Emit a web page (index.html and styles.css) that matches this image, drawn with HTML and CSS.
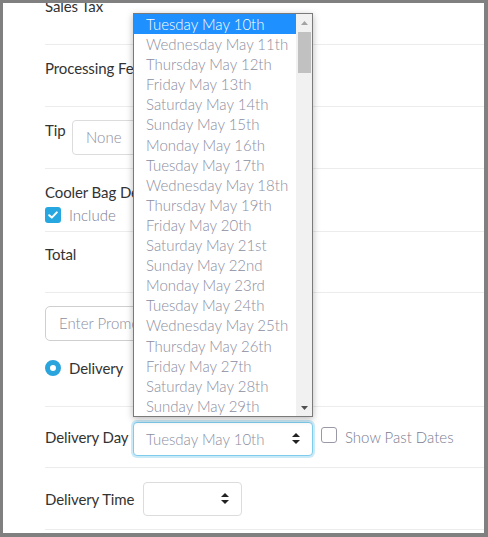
FILE: index.html
```html
<!DOCTYPE html>
<html>
<head>
<meta charset="utf-8">
<link rel="stylesheet" href="styles.css">
</head>
<body>
<div class="frame">
  <div class="sheet">
    <div class="row row-first"><span class="label">Sales Tax</span></div>
    <div class="row"><span class="label">Processing Fee</span></div>
    <div class="row">
      <span class="label label-tip">Tip</span>
      <div class="field field-tip">None</div>
    </div>
    <div class="row row-cooler">
      <span class="label">Cooler Bag Deposit</span>
      <div class="check-line">
        <span class="checkbox checked">
          <svg width="10" height="8" viewBox="0 0 10 8"><path d="M1.2 4.2 L3.8 6.6 L8.8 1.4" fill="none" stroke="#fff" stroke-width="2" stroke-linecap="round" stroke-linejoin="round"/></svg>
        </span>
        <span class="muted">Include</span>
      </div>
    </div>
    <div class="row row-total"><span class="label">Total</span></div>
    <div class="row row-promo">
      <div class="field field-promo">Enter Promo Code</div>
      <div class="radio-line">
        <span class="radio"></span>
        <span class="label">Delivery</span>
      </div>
    </div>
    <div class="row row-center row-day">
      <span class="label label-day">Delivery Day</span>
      <div class="select select-day">
        <span class="select-text">Tuesday May 10th</span>
        <svg class="arrows" width="8" height="11" viewBox="0 0 8 11"><path d="M4 0 L8 4 L0 4 Z M4 11 L8 7 L0 7 Z" fill="#222"/></svg>
      </div>
      <span class="checkbox empty"></span>
      <span class="muted">Show Past Dates</span>
    </div>
    <div class="row row-center">
      <span class="label label-time">Delivery Time</span>
      <div class="select select-time">
        <svg class="arrows" width="8" height="11" viewBox="0 0 8 11"><path d="M4 0 L8 4 L0 4 Z M4 11 L8 7 L0 7 Z" fill="#222"/></svg>
      </div>
    </div>
  </div>

  <div class="dropdown">
    <ul class="options">
      <li class="selected">Tuesday May 10th</li>
      <li>Wednesday May 11th</li>
      <li>Thursday May 12th</li>
      <li>Friday May 13th</li>
      <li>Saturday May 14th</li>
      <li>Sunday May 15th</li>
      <li>Monday May 16th</li>
      <li>Tuesday May 17th</li>
      <li>Wednesday May 18th</li>
      <li>Thursday May 19th</li>
      <li>Friday May 20th</li>
      <li>Saturday May 21st</li>
      <li>Sunday May 22nd</li>
      <li>Monday May 23rd</li>
      <li>Tuesday May 24th</li>
      <li>Wednesday May 25th</li>
      <li>Thursday May 26th</li>
      <li>Friday May 27th</li>
      <li>Saturday May 28th</li>
      <li>Sunday May 29th</li>
    </ul>
    <div class="scrollbar">
      <svg class="sb-arrow" width="7" height="4" viewBox="0 0 7 4"><path d="M3.5 0 L7 4 L0 4 Z" fill="#a3a3a3"/></svg>
      <div class="sb-thumb"></div>
      <div class="sb-track"></div>
      <svg class="sb-arrow" width="7" height="4" viewBox="0 0 7 4"><path d="M0 0 L7 0 L3.5 4 Z" fill="#505050"/></svg>
    </div>
  </div>
</div>
</body>
</html>
```

FILE: styles.css
```css
html, body {
  margin: 0;
  padding: 0;
  background: #fff;
}

body {
  font-family: "Lato", "Open Sans", sans-serif;
  font-size: 15px;
  line-height: 22px;
  color: #333;
}

.frame {
  position: relative;
  width: 488px;
  height: 537px;
  box-sizing: border-box;
  border-style: solid;
  border-color: #808080;
  border-width: 3px 4px 4px 3px;
  overflow: hidden;
}

.sheet {
  margin-top: -20px;
  padding-left: 42px;
}

.row {
  display: flex;
  align-items: flex-start;
  height: 62px;
  box-sizing: border-box;
  padding-top: 12px;
  border-bottom: 1px solid #ececec;
}

.row-cooler {
  flex-direction: column;
  height: 63px;
}

.row-total {
  height: 61px;
  padding-top: 11px;
}

.row-promo {
  flex-direction: column;
  height: 114px;
  padding-top: 13px;
}

.row-center {
  align-items: center;
  padding-top: 0;
}

.row-day {
  height: 61px;
}

.label {
  color: #333;
  letter-spacing: -0.1px;
}

.label-tip { width: 27px; }
.label-day { width: 88px; }
.label-time { width: 98px; }

.muted {
  color: #7a7c8f;
  font-weight: 300;
}

.field {
  box-sizing: border-box;
  height: 35px;
  border: 1px solid #dcdcdc;
  border-radius: 4px;
  padding: 0 13px;
  line-height: 33px;
  color: #8c8ea0;
  font-weight: 300;
}

.field-tip {
  width: 120px;
  margin-top: 1px;
}

.field-promo {
  width: 230px;
  border-color: #cfcfcf;
  border-radius: 5px;
}

.check-line {
  display: flex;
  align-items: center;
  gap: 8px;
  margin-top: 1px;
}

.checkbox {
  display: inline-flex;
  align-items: center;
  justify-content: center;
  width: 16px;
  height: 16px;
  box-sizing: border-box;
  border-radius: 3px;
  flex: none;
}

.checkbox.checked {
  background: #27a7df;
}

.checkbox.empty {
  border: 1px solid #9a9aa6;
  margin-left: 8px;
  margin-right: 8px;
  margin-top: -5px;
}

.radio-line {
  display: flex;
  align-items: center;
  gap: 8px;
  margin-top: 16px;
}

.radio {
  width: 16px;
  height: 16px;
  box-sizing: border-box;
  border-radius: 50%;
  border: 5px solid #2aa4dc;
  background: #fff;
}

.select {
  display: flex;
  align-items: center;
  box-sizing: border-box;
  height: 34px;
  border: 1px solid #dcdcdc;
  border-radius: 4px;
  background: #fff;
  padding: 0 12px;
}

.select-day {
  width: 180px;
  border-color: #7fcbec;
  box-shadow: 0 0 0 2px #cbeaf8;
  margin-top: 3px;
}

.select-time {
  width: 99px;
  justify-content: flex-end;
}

.select-text {
  flex: 1;
  color: #8c8ea0;
  font-weight: 300;
}

.dropdown {
  position: absolute;
  left: 130px;
  top: 10px;
  width: 180px;
  height: 404px;
  box-sizing: border-box;
  border: 1px solid #7a7a7a;
  background: #fff;
  display: flex;
  box-shadow: 0 2px 7px rgba(0, 0, 0, 0.28);
}

.options {
  list-style: none;
  margin: 0;
  padding: 0;
  flex: 1;
}

.options li {
  height: 20.1px;
  line-height: 20px;
  padding-left: 12px;
  color: #8c8ea0;
  font-weight: 300;
  white-space: nowrap;
}

.options li.selected {
  background: #1e90ff;
  color: #fff;
}

.scrollbar {
  width: 16px;
  background: #f1f1f1;
  display: flex;
  flex-direction: column;
  align-items: center;
}

.sb-arrow {
  flex: none;
  margin: 7px 0 6px;
}

.sb-arrow:last-child {
  margin: 6px 0 6px;
}

.sb-thumb {
  width: 13px;
  height: 41px;
  background: #c1c1c1;
  margin-top: 1px;
}

.sb-track {
  flex: 1;
}
```
